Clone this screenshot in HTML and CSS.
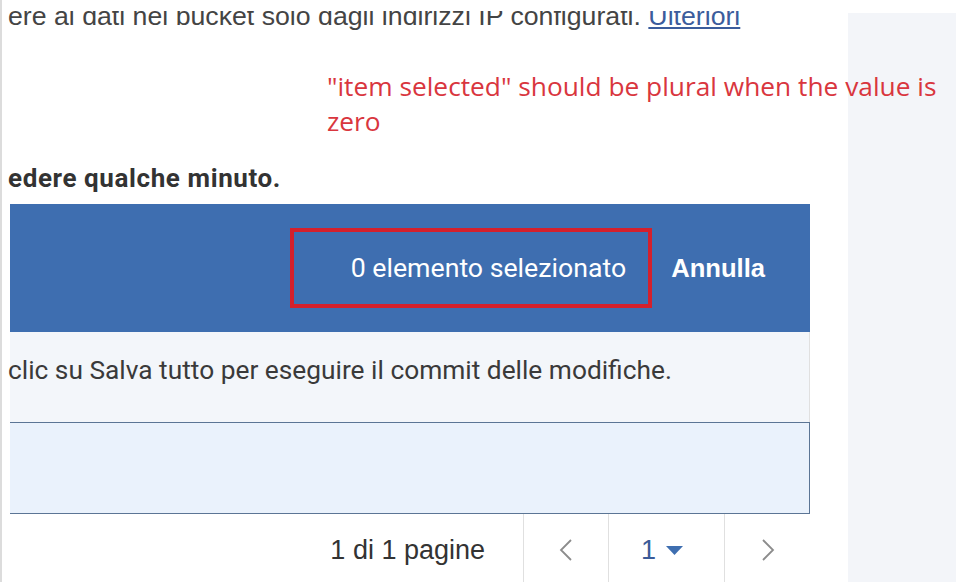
FILE: index.html
```html
<!DOCTYPE html>
<html lang="it">
<head>
<meta charset="utf-8">
<title>Selezione elementi</title>
<link rel="stylesheet" href="styles.css">
</head>
<body>
  <main class="main">
    <div class="intro-clip">
      <p class="intro-line">ere ai dati nel bucket solo dagli indirizzi IP configurati. <a class="link" href="#">Ulteriori</a></p>
    </div>
    <p class="notice">edere qualche minuto.</p>
    <section class="table">
      <div class="batch-bar">
        <div class="mark-box"><span class="count">0 elemento selezionato</span></div>
        <span class="cancel">Annulla</span>
      </div>
      <div class="hint">clic su Salva tutto per eseguire il commit delle modifiche.</div>
      <div class="row-box"></div>
      <div class="pager">
        <span class="pager-info">1 di 1 pagine</span>
        <span class="pager-cell prev">
          <svg width="14" height="24" viewBox="0 0 14 24"><path d="M12 2 L2 12 L12 22" fill="none" stroke="#8c8c8c" stroke-width="1.8"/></svg>
        </span>
        <span class="pager-cell page">
          <span class="page-num">1</span>
          <svg width="17" height="9" viewBox="0 0 17 9"><path d="M0 0 H17 L8.5 9 Z" fill="#3e6eb0"/></svg>
        </span>
        <span class="pager-cell next">
          <svg width="14" height="24" viewBox="0 0 14 24"><path d="M2 2 L12 12 L2 22" fill="none" stroke="#8c8c8c" stroke-width="1.8"/></svg>
        </span>
      </div>
    </section>
    <p class="annotation">"item selected" should be plural when the value is<br>zero</p>
  </main>
  <aside class="side"></aside>
</body>
</html>
```
FILE: styles.css
```css
html, body {
  margin: 0;
  padding: 0;
  background: #ffffff;
}
body {
  display: flex;
  height: 582px;
  overflow: hidden;
  font-family: "Roboto", "Liberation Sans", sans-serif;
  color: #3a3a3a;
}
.main {
  position: relative;
  width: 846px;
  flex: none;
  border-left: 2px solid #dcdcdc;
}
.side {
  flex: 1;
  margin-top: 13px;
  background: #f3f5f9;
}
.intro-clip {
  margin-top: 11px;
  height: 22px;
  overflow: hidden;
  padding-left: 6px;
}
.intro-line {
  margin: -10px 0 0 0;
  font-family: "Liberation Sans", Arial, sans-serif;
  font-size: 26.7px;
  line-height: 30px;
  color: #444;
  white-space: nowrap;
}
.link {
  color: #3b5c9c;
  text-decoration: underline;
}
.notice {
  margin: 130px 0 0 0;
  padding-left: 6px;
  font-size: 26px;
  line-height: 30px;
  font-weight: 700;
  letter-spacing: 0.6px;
  color: #333;
  white-space: nowrap;
}
.table {
  margin: 11px 0 0 8px;
  width: 800px;
}
.batch-bar {
  height: 128px;
  background: #3e6eb0;
  display: flex;
  align-items: center;
  justify-content: flex-end;
  padding-right: 45px;
  color: #fff;
}
.mark-box {
  box-sizing: border-box;
  height: 80px;
  border: 4px solid #d4202c;
  display: flex;
  align-items: center;
  padding: 0 22px 0 57px;
}
.count {
  font-size: 26.7px;
  white-space: nowrap;
}
.cancel {
  margin-left: 19px;
  font-family: "Liberation Sans", Arial, sans-serif;
  font-weight: 700;
  font-size: 25.6px;
}
.hint {
  box-sizing: border-box;
  height: 90px;
  background: #f3f6fa;
  border-right: 1px solid #e0e0e0;
  padding-top: 23px;
  text-indent: -2px;
  font-size: 26.3px;
  line-height: 30px;
  color: #3a3a3a;
  white-space: nowrap;
}
.row-box {
  box-sizing: border-box;
  height: 92px;
  background: #eaf2fc;
  border: 1px solid #5b7595;
  border-left: none;
}
.pager {
  height: 80px;
  display: flex;
  justify-content: flex-end;
  align-items: stretch;
  font-family: "Liberation Sans", Arial, sans-serif;
  font-size: 27px;
  color: #333;
}
.pager-info {
  display: flex;
  align-items: center;
  padding: 0 38px 8px 0;
  white-space: nowrap;
}
.pager-cell {
  display: flex;
  align-items: center;
  justify-content: center;
  border-left: 1px solid #e0e0e0;
  padding-bottom: 8px;
}
.prev {
  width: 84px;
}
.page {
  width: 106px;
  padding-right: 9px;
  gap: 10px;
}
.page-num {
  color: #3b5b98;
}
.next {
  width: 85px;
}
.annotation {
  position: absolute;
  left: 325px;
  top: 69px;
  margin: 0;
  font-family: "Open Sans", sans-serif;
  font-size: 26.3px;
  line-height: 35px;
  color: #d9363e;
  white-space: nowrap;
  z-index: 2;
}
```
